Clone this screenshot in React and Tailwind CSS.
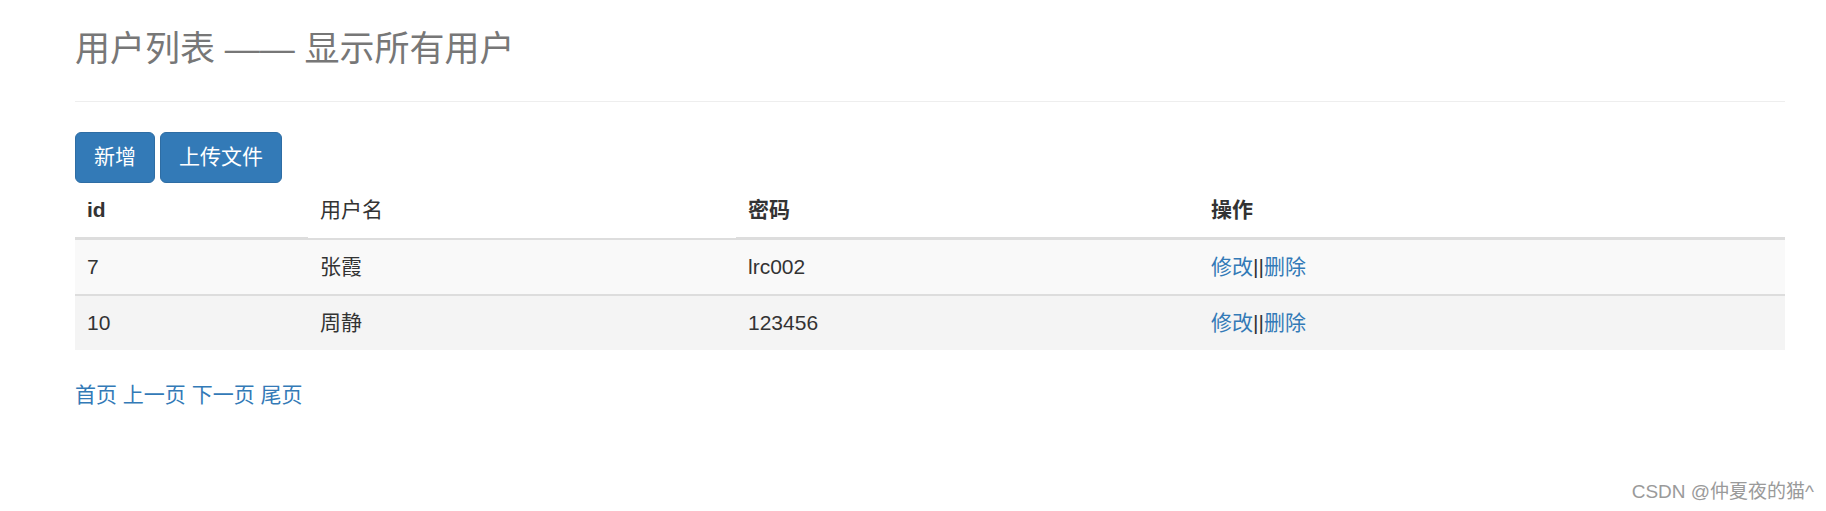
const USERS = [
  { id: 7, name: "张霞", password: "lrc002", bg: "bg-[#f9f9f9]" },
  { id: 10, name: "周静", password: "123456", bg: "bg-[#f4f4f4]" },
];

const PAGES = ["首页", "上一页", "下一页", "尾页"];

export default function App() {
  return (
    <div className="relative h-[511px] w-[1826px] overflow-hidden bg-white font-['Liberation_Sans','Noto_Sans_CJK_SC',sans-serif] text-[21px] text-[#333]">
      <div className="ml-[75px] w-[1710px]">
        <div className="border-b border-[#eee] pb-[17px] pt-[29px] mb-[30px]">
          <h3 className="text-[35px] font-normal leading-[39.6px] text-[#777] mb-[15px]">
            用户列表 —— 显示所有用户
          </h3>
        </div>

        <div className="flex gap-[5px]">
          <button
            type="button"
            className="flex h-[51px] items-center rounded-[6px] border border-[#2e6da4] bg-[#337ab7] px-[18px] leading-[30px] text-white"
          >
            新增
          </button>
          <button
            type="button"
            className="flex h-[51px] items-center rounded-[6px] border border-[#2e6da4] bg-[#337ab7] px-[18px] leading-[30px] text-white"
          >
            上传文件
          </button>
        </div>

        <table className="w-full table-fixed border-separate border-spacing-0 text-left">
          <colgroup>
            <col className="w-[233px]" />
            <col className="w-[428px]" />
            <col className="w-[463px]" />
            <col className="w-[586px]" />
          </colgroup>
          <thead>
            <tr>
              <th className="border-b border-[#ddd] px-[12px] py-[12px] align-bottom font-bold leading-[30px]">id</th>
              <th className="border-b border-white px-[12px] py-[12px] align-bottom font-normal leading-[30px]">用户名</th>
              <th className="border-b border-[#ddd] px-[12px] py-[12px] align-bottom font-bold leading-[30px]">密码</th>
              <th className="border-b border-[#ddd] px-[12px] py-[12px] align-bottom font-bold leading-[30px]">操作</th>
            </tr>
          </thead>
          <tbody>
            {USERS.map((u) => (
              <tr key={u.id} className={u.bg}>
                <td className="border-t-2 border-[#ddd] px-[12px] py-[12px] leading-[30px]">{u.id}</td>
                <td className="border-t-2 border-[#ddd] px-[12px] py-[12px] leading-[30px]">{u.name}</td>
                <td className="border-t-2 border-[#ddd] px-[12px] py-[12px] leading-[30px]">{u.password}</td>
                <td className="border-t-2 border-[#ddd] px-[12px] py-[12px] leading-[30px]">
                  <a href="#" className="text-[#337ab7]">修改</a>||<a href="#" className="text-[#337ab7]">删除</a>
                </td>
              </tr>
            ))}
          </tbody>
        </table>

        <div className="mt-[30px] leading-[30px]">
          {PAGES.map((p, i) => (
            <span key={p}>
              <a href="#" className="text-[#337ab7]">{p}</a>
              {i < PAGES.length - 1 ? " " : ""}
            </span>
          ))}
        </div>
      </div>

      <div className="absolute bottom-[7px] right-[12px] text-[19px] leading-[24px] text-[#9a9a9a]">
        CSDN @仲夏夜的猫^
      </div>
    </div>
  );
}
